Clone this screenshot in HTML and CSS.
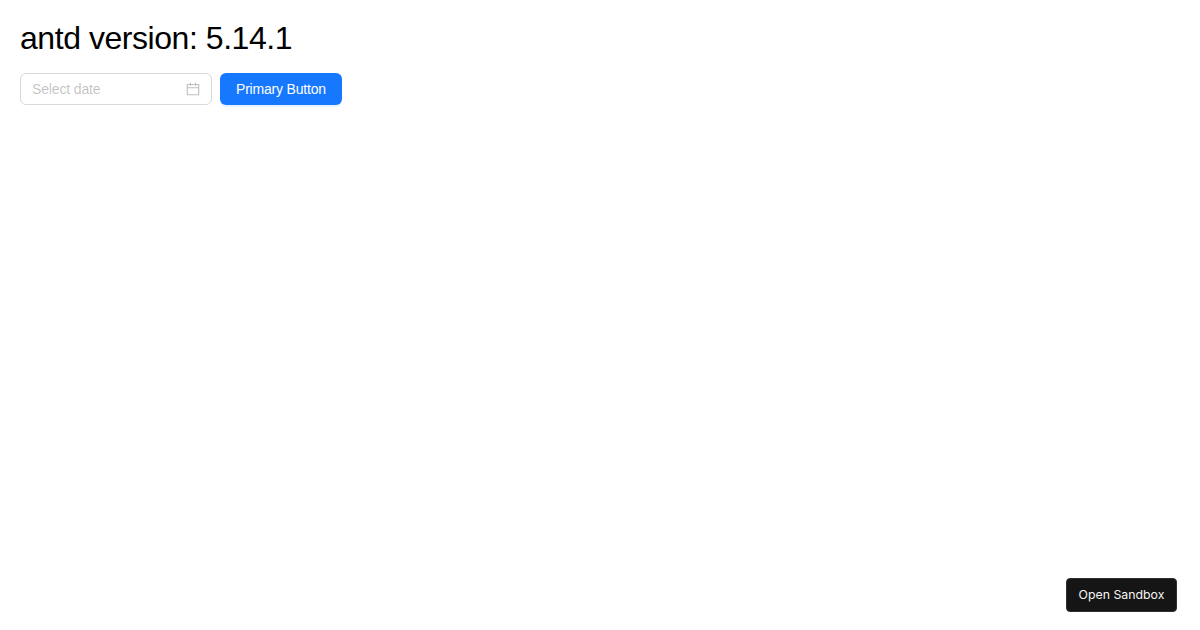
FILE: index.html
```html
<!DOCTYPE html>
<html lang="en">
<head>
<meta charset="utf-8">
<title>antd version: 5.14.1</title>
<link rel="stylesheet" href="styles.css">
</head>
<body>
<div class="app">
  <h1 class="title">antd version: 5.14.1</h1>
  <div class="controls">
    <div class="picker">
      <input class="picker-input" type="text" placeholder="Select date" readonly>
      <svg class="picker-icon" viewBox="64 64 896 896" aria-hidden="true"><path d="M880 184H712v-64c0-4.4-3.6-8-8-8h-56c-4.4 0-8 3.6-8 8v64H384v-64c0-4.4-3.6-8-8-8h-56c-4.4 0-8 3.6-8 8v64H144c-17.7 0-32 14.3-32 32v664c0 17.7 14.3 32 32 32h736c17.7 0 32-14.3 32-32V216c0-17.7-14.3-32-32-32zm-40 656H184V460h656v380zM184 392V256h128v48c0 4.4 3.6 8 8 8h56c4.4 0 8-3.6 8-8v-48h256v48c0 4.4 3.6 8 8 8h56c4.4 0 8-3.6 8-8v-48h128v136H184z"/></svg>
    </div>
    <button class="primary" type="button">Primary Button</button>
  </div>
</div>
<a class="sandbox" href="#">Open Sandbox</a>
</body>
</html>
```
FILE: styles.css
```css
* { box-sizing: border-box; }
html, body { margin: 0; height: 100%; background: #fff; }
body { font-family: "Liberation Sans", Arial, sans-serif; font-size: 14px; }
.app { padding: 20px; }
.title {
  margin: 0 0 16px;
  font-size: 32px;
  line-height: 37px;
  font-weight: 400;
  color: #000;
  letter-spacing: -.45px;
}
.controls { display: flex; gap: 8px; align-items: flex-start; }
.picker {
  width: 192px;
  height: 32px;
  display: flex;
  align-items: center;
  padding: 0 11px;
  border: 1px solid #d9d9d9;
  border-radius: 6px;
  background: #fff;
}
.picker-input {
  flex: 1;
  min-width: 0;
  border: 0;
  outline: 0;
  padding: 0;
  font: inherit;
  letter-spacing: -.15px;
  color: rgba(0, 0, 0, .88);
}
.picker-input::placeholder { color: rgba(0, 0, 0, .25); }
.picker-icon { width: 14px; height: 14px; fill: rgba(0, 0, 0, .25); flex: none; }
.primary {
  height: 32px;
  padding: 0 16px;
  border: 0;
  border-radius: 6px;
  background: #1677ff;
  color: #fff;
  font: inherit;
  letter-spacing: -.19px;
  box-shadow: 0 2px 0 rgba(5, 145, 255, .1);
}
.sandbox {
  position: fixed;
  right: 23px;
  bottom: 18px;
  width: 111px;
  height: 34px;
  padding: 0 0 1px;
  display: flex;
  align-items: center;
  justify-content: center;
  background: #151515;
  border: 1px solid #2f2f2f;
  border-radius: 4px;
  color: #f5f5f5;
  font-family: Inter, sans-serif;
  font-size: 12.3px;
  text-decoration: none;
}
```
